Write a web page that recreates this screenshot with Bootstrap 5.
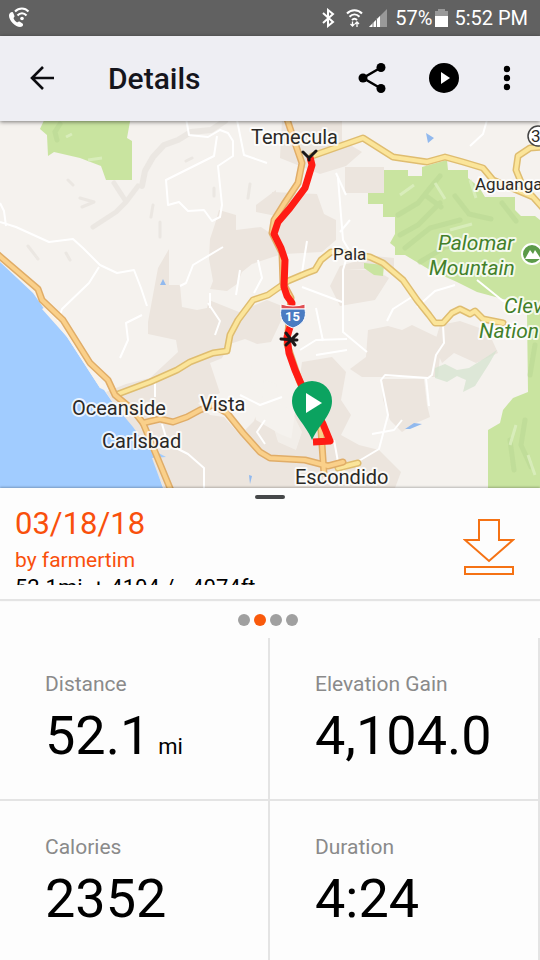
<!DOCTYPE html>
<html lang="en">
<head>
<meta charset="utf-8">
<meta name="viewport" content="width=device-width, initial-scale=1">
<title>Details</title>
<link href="https://cdn.jsdelivr.net/npm/bootstrap@5.3.0/dist/css/bootstrap.min.css" rel="stylesheet">
<style>
  body { font-family: Roboto, "Liberation Sans", sans-serif; background: #fdfdfd; color: #000; }
  .status-bar { background: #616161; color: #fff; height: 36px; font-size: 20px; line-height: 36px; padding: 0 12px 0 8px; }
  .wifi-icon { margin-left: 9px; margin-right: 2px; }
  .charge { margin-left: 7px; margin-right: 3px; }
  .clock { margin-left: 6px; }
  .app-bar { background: #eeeef3; height: 85px; padding: 0 18px 0 22px; box-shadow: 0 1px 4px rgba(0,0,0,.5); z-index: 2; }
  .app-bar h1 { font-size: 30px; font-weight: 500; color: #15151c; margin-left: 46px; }
  .icon-btn { border: 0; background: none; padding: 0; line-height: 0; color: #000; }
  .play-btn { margin-left: 41px; margin-right: 33px; }
  .route-map { aspect-ratio: 540 / 367; }
  .route-map text { font-size: 20px; fill: #2b2926; stroke: #fff; stroke-width: 4px; stroke-linejoin: round; stroke-opacity: .8; paint-order: stroke; }
  .route-map .minor-name { font-size: 17px; }
  .route-map .park-name { font-size: 21px; font-style: italic; fill: #42802a; }
  .route-map .road-number { font-size: 17px; stroke: none; }
  .route-map .shield-number { font-size: 13px; font-weight: 700; fill: #fff; stroke: none; }
  .sheet { height: 113px; border-bottom: 2px solid #e4e4e4; box-shadow: 0 -1px 2px rgba(0,0,0,.25); z-index: 1; background: #fdfdfd; }
  .sheet-body { padding: 0 25px 0 15px; }
  .grabber { width: 30px; height: 4px; border-radius: 2px; background: #46484a; margin: 7px auto 0; }
  .ride-title { font-size: 31px; line-height: 36px; color: #f9500c; margin-top: 7px; }
  .ride-author { font-size: 21px; line-height: 26px; color: #f9500c; text-decoration: none; margin-top: 5px; }
  .ride-summary { font-size: 22px; line-height: 26px; height: 10px; overflow: hidden; margin-top: 2px; }
  .download-btn { margin-top: 17px; }
  .pager { height: 37px; gap: 4px; padding-right: 4px; }
  .pager button { width: 12px; height: 12px; border: 0; padding: 0; border-radius: 50%; background: #a0a0a0; }
  .pager button.current { background: #f95a0c; }
  .stat { height: 161px; padding: 32px 0 0 45px; border-right: 2px solid #e4e4e4; }
  .stat-top { border-bottom: 2px solid #e4e4e4; height: 163px; }
  .stat dt { font-size: 21px; line-height: 28px; font-weight: 400; color: #8a8a8a; }
  .stat dd { font-size: 54px; line-height: 64px; margin: 6px 0 0; }
  .stat dd .unit { font-size: 22px; margin-left: 8px; }
</style>
<script src="https://cdn.jsdelivr.net/npm/bootstrap@5.3.0/dist/js/bootstrap.bundle.min.js"></script>
</head>
<body class="overflow-x-hidden">
<div class="status-bar d-flex align-items-center">
  <svg class="me-auto" width="24" height="24" viewBox="0 0 24 24" fill="none" stroke="#fff" aria-label="Wi-Fi calling">
    <path d="M2 7c2-1.500 3-1 3.500.500l1 2.500c.3 1-1.300 1.800-.8 2.800s1.500 2.500 2.800 3.200 2-1 3-.5l3 2c.8.600.8 2-.5 3C9 23.500-2.500 12 2 7z" fill="#fff" stroke="none"/>
    <path d="M7 5.500C11 1.500 17 1.500 20.500 5.500M9.500 9.500c2.500-3 6.500-3 9 0" stroke-width="2"/><circle cx="14" cy="12.500" r="1.800" fill="#fff" stroke="none"/>
  </svg>
  <svg width="14" height="20" viewBox="0 0 14 20" fill="none" stroke="#fff" stroke-width="2" aria-label="Bluetooth"><path d="M2 5l10 9-5 4V2l5 4-10 9"/></svg>
  <svg class="wifi-icon" width="22" height="20" viewBox="0 0 22 20" fill="none" stroke="#fff" stroke-width="2" aria-label="Wi-Fi">
    <path d="M3 5.500c4-4.500 11-4.500 15 0M5.500 8.800c3-3 7-3 10 0M8 12c1.500-1.500 3.500-1.500 5 0"/><path d="M8.500 13.500v5M6.500 16l2 2 2-2M13 19v-5M11 16l2-2 2 2" stroke-width="1.300"/>
  </svg>
  <svg width="20" height="20" viewBox="0 0 20 20" aria-label="Signal"><path d="M1 19L19 1v18z" fill="#999"/><path d="M1 19L12 8v11z" fill="#fff"/><path d="M5 14v5M8.500 10v9" stroke="#777"/></svg>
  <span class="charge">57%</span>
  <svg width="13" height="20" viewBox="0 0 13 20" aria-label="Battery"><path d="M3 1h7v2h3v7H0V3h3z" fill="#999"/><path d="M0 8h13v11H0z" fill="#fff"/></svg>
  <span class="clock">5:52 PM</span>
</div>

<header class="app-bar d-flex align-items-center position-relative">
  <button class="icon-btn" type="button" aria-label="Back"><svg width="40" height="32" viewBox="0 0 40 32" fill="none" stroke="#0c0c10" stroke-width="2.600"><path d="M32 15H10M21 4L10 15l11 11"/></svg></button>
  <h1 class="mb-0 me-auto">Details</h1>
  <button class="icon-btn" type="button" aria-label="Share"><svg width="32" height="32" viewBox="0 0 32 32" stroke="#000" stroke-width="2.500"><path d="M25 4.500L7 15l18 10.500" fill="none"/><g stroke="none"><circle cx="25" cy="4.500" r="4.500"/><circle cx="7" cy="15" r="4.500"/><circle cx="25" cy="25.500" r="4.500"/></g></svg></button>
  <button class="icon-btn play-btn" type="button" aria-label="Play"><svg width="30" height="32" viewBox="0 0 30 32"><circle cx="15" cy="15" r="15"/><path d="M12 9v12l9-6z" fill="#fff"/></svg></button>
  <button class="icon-btn" type="button" aria-label="More options"><svg width="30" height="32" viewBox="0 0 30 32"><circle cx="15" cy="6" r="3.200"/><circle cx="15" cy="15" r="3.200"/><circle cx="15" cy="24" r="3.200"/></svg></button>
</header>

<main>
<svg class="route-map w-100 d-block" viewBox="0 121 540 367" preserveAspectRatio="xMidYMid slice" role="img" aria-label="Route map from Escondido to Temecula">
  <path d="M0 110h540v390H0z" fill="#f5f2ee"/>
  <!-- built-up areas -->
  <g fill="#ece5de">
    <path d="M219 210l17 5v15l25-3 9 6 12-3v24l-30 10-10 8-5 12-10 7-17-2 3-8-4-22 1-20 5-15zM256 205l20-15v26l-20-4zM272 192l45 2 7 20 12 6v20l-14 12-38 2-10-16zM282 120h60v20l20 12-16 14-26 8-40-16zM345 167h39v26h-39zM158 268l11-19v36h11l2 22 15 3 10-2 2-8 30 12 28-12 20 8-16 34-14 2-12-5-15 5-8 14-4 22 30 8 8 32 24 14 20 8v50h-134l-20-40-40-60 20-8 24-6 28-26-2-12-28-6 0-12z"/>
    <path d="M368 330l20-4 14 4 10-5 25 12 3 18-2 22h-76l-12-8 16-12zM382 379h42l3 26 3 12-16 7-12 8-12-12-7-20zM440 325l20-4 28 10 10 22-22 10-22-10-12 10-8-18zM302 362l30-5 14 15-5 28 10 15-10 20 18 10 20 5 22 22-6 16h-125l20-40zM345 270h30l14 8-14 22-35 6-10-20 10-20 34-10 20 2v10z"/>
  </g>
  <g fill="#f5f2ee">
    <path d="M210 363l20-8 22 10-2 18 12 14-8 24-14 14-16-18-14-2-12-12 22-10z"/>
    <path d="M264 380l12 4 2 18 14 10 10 20-6 18-18-8-6-20-10-12z" opacity=".7"/>
  </g>
  <!-- low relief shading -->
  <g fill="none" stroke="#e8e4df" stroke-linejoin="round" stroke-linecap="round" opacity=".75">
    <path d="M225 121l-14 9-20 2-13 8-14 5-11 12-8 14-3 15" stroke-width="6"/>
    <path d="M138 186l-12 16-10 10-23 15M114 183l11 17" stroke-width="5"/>
    <path d="M153 205l-2 12M160 222l0 15M250 184l-2 14M28 246l10 13M68 180l5 5M80 198l14 4-12 5M66 253l4 7M214 188v8M186 161l6-3" stroke-width="3"/>
  </g>
  <!-- parks -->
  <g fill="#c9e4a0">
    <path d="M46 116L40 129l7 6 1 21 6-4 26 6 21 8 5 14h26v-39l-5-3 4-22z"/>
    <path d="M384 170h24v6h14v-9l25-7 1 10h20v8l11 9 6 10h30v13l6 6h14l5 4v86l-37-7-26-7-20-10-27-12-25-15h-10v-8l-5-4 5-9v-17h-12v-13h-15v-11h16z"/>
    <path d="M527 313l13-15v190h-52v-58l12-7 3-13 10-12 15-6z"/>
    <path d="M364 263l20 2-1 11-9-1-10-7z"/>
  </g>
  <g fill="none" stroke="#b3d28e" stroke-width="5" opacity=".4" stroke-linecap="round">
    <path d="M60 124l-5 8 2 8M398 215l20-12 12-15 10-12M400 235l18-10 22-22M405 248l25-20 30-8M420 262l25-15 35-6M425 195l16 12M455 196l14 18 22 5M502 203l14 18M525 420l-4 25 10 22M510 440l4 30M535 345l-5 30"/>
  </g>
  <g fill="none" stroke="#dcefc0" stroke-width="3" opacity=".8"><path d="M400 195l14-10M435 183l10 16M470 180l6 18M450 230l22-6M66 137l6-3M88 160l14-2M516 425l-6 20M528 455l7 20"/></g>
  <path d="M435 368l10-4 12 6 12-2 16-10 12-8-8 14-14 22-12 6 3-12-9-4-10 6-12-4z" fill="#d4e3cf" opacity=".75"/>
  <!-- ocean and lakes -->
  <path d="M0 262l33 31 12 17 22 27 33 51 4 2 9 13 20 24 14 20 19 10-14 1 11 30H0z" fill="#a1ccff"/>
  <path d="M42 309l25 28 33 51 4-2-27-42-30-38z" fill="#f9f3ec"/>
  <path d="M163 279l-3 6h6zM426 133l8 5-6 5zM405 429l9-6 8 1-12 5zM249 475l3 1-2 8z" fill="#91b9ee"/>
  <!-- minor roads -->
  <g fill="none" stroke="#fff" stroke-width="2" stroke-linejoin="round">
    <path d="M0 203l4 8 2 15M0 222l16 5 33 15 24-3 10 9 17 17 17 8 17-3 7 18 6 18M99 267l-10 16-27 26-4 12"/>
    <path d="M186 118l3 17 19 2 12-7 8 3 5 8v15l-15 10 4 39-2 12-8 4-8-11-16 1-9-9-11 3-2-25 48-24 3-20M237 120l7 35 23 8M223 247l-30 18-7 18-6 3M210 293v15M240 270l-4 25M258 260l4 18-8 15"/>
    <path d="M155 382v15M162 424l6 20 20 10 16 14v22M142 315l-16 8 2 17-8 18M215 335l5-14-12-18M265 420l-8 12 8 12M240 395l20 10 22-8"/>
    <path d="M338 178l5 62 6 10-6 20v62l24 20M342 302l-40-15M307 241l-6 38M316 308l7 33M300 350l16-10 31-1M316 355l31-5M415 295l-22 14-6 12M455 285l-20 6-18 16M487 120l-4 14-13 12M477 280l26 21 37 6"/>
    <path d="M443 325l1 18-8 12-4 20-4 3-43-3-4 5 7 35-9 34-37 22M334 440l4 22M426 378l3 28M372 434l22-4 8-10M346 195l-10-22M350 220l-10 12"/>
  </g>
  <!-- highways: casing below, fill above -->
  <g fill="none" stroke-linejoin="round" stroke-linecap="round">
    <g stroke="#dfbd70" stroke-width="7">
      <path d="M118 394l32-12 27-12 13-8 23-9 14-2 3-16 8-15 15-20 15-5 20-14 19-8 8-3 6-10 10-8 15 1 24 4 13 6 20 17 14 20 12 15 6 8h8l9-10 8-4 10 5 5-3 8 8 20 4"/>
      <path d="M312 156l51-18 30 19 34 5 18-5 18 5 20 6 10 12 40 17 10 11M545 147l-15 1-12 8-2 14 7 17 10 10M338 468l20-5"/>
    </g>
    <g stroke="#fbe59a" stroke-width="4">
      <path d="M118 394l32-12 27-12 13-8 23-9 14-2 3-16 8-15 15-20 15-5 20-14 19-8 8-3 6-10 10-8 15 1 24 4 13 6 20 17 14 20 12 15 6 8h8l9-10 8-4 10 5 5-3 8 8 20 4"/>
      <path d="M312 156l51-18 30 19 34 5 18-5 18 5 20 6 10 12 40 17 10 11M545 147l-15 1-12 8-2 14 7 17 10 10M338 468l20-5"/>
    </g>
    <g stroke="#e0ad68" stroke-width="7">
      <path d="M-4 253l42 36 4 11 21 20 27 43 18 17 7 15 18 15 10 13 10 24 19 46"/>
      <path d="M143 423l17-4 13 3 14-5 13-7 13-5 14 8 16 20 17 19 10 6 35 2 23 6 15-4M284 110l11 33 7 20-4 20-14 21-10 16-2 13 10 20 1 30 8 15-4 46 12 36 22 50 3 44"/>
    </g>
    <g stroke="#fad08a" stroke-width="4">
      <path d="M-4 253l42 36 4 11 21 20 27 43 18 17 7 15 18 15 10 13 10 24 19 46"/>
      <path d="M143 423l17-4 13 3 14-5 13-7 13-5 14 8 16 20 17 19 10 6 35 2 23 6 15-4M284 110l11 33 7 20-4 20-14 21-10 16-2 13 10 20 1 30 8 15-4 46 12 36 22 50 3 44"/>
    </g>
  </g>
  <!-- place names -->
  <text x="251" y="144">Temecula</text>
  <text class="minor-name" x="333" y="260">Pala</text>
  <text class="minor-name" x="475" y="190">Aguanga</text>
  <text x="72" y="415">Oceanside</text>
  <text x="102" y="448">Carlsbad</text>
  <text x="200" y="411">Vista</text>
  <text x="295" y="484">Escondido</text>
  <text class="park-name" x="438" y="250">Palomar</text>
  <text class="park-name" x="429" y="275">Mountain</text>
  <text class="park-name" x="504" y="313">Clev</text>
  <text class="park-name" x="479" y="338">Nation</text>
  <circle cx="532" cy="254" r="10" fill="#5b9a48" stroke="#fff" stroke-width="2"/><path d="M525 259l5-9 3 4 2-4 6 9z" fill="#fff"/>
  <circle cx="538" cy="136" r="10" fill="#fff" stroke="#444" stroke-width="1.500"/><text class="road-number" x="531" y="142">3</text>
  <!-- recorded route -->
  <path d="M310 157l2 8-7 23-15 20-12 14-4 12 7 14 4 12-1 27 3 9 5 7-2 24-3 10 2 16 6 17 7 16 21 38 7 17-17 1" fill="none" stroke="#ff1c14" stroke-width="7" stroke-linejoin="round"/>
  <path d="M303 152l6 6 7-7M309 157v3M281 339l16 1M286 333l9 12M297 334l-11 11" fill="none" stroke="#1c1717" stroke-width="3" stroke-linecap="round"/>
  <path d="M281 309v-5q12 4 24 0v5z" fill="#df5054" stroke="#fff"/>
  <path d="M281 309h24c2 10-3 16-12 19-9-3-14-9-12-19z" fill="#4b7cc2" stroke="#fff"/>
  <text class="shield-number" x="285" y="321">15</text>
  <path d="M312 440c-6-16-20-25-20-39a20 20 0 0 1 40 0c0 14-12 22-20 39z" fill="#0ba360"/><path d="M306 393v20l16-10z" fill="#fff"/>
</svg>

<section class="sheet position-relative">
  <div class="d-flex"><div class="grabber"></div></div>
  <div class="sheet-body d-flex justify-content-between">
    <div>
      <h2 class="ride-title fw-normal mb-0">03/18/18</h2>
      <a class="ride-author d-block" href="#">by farmertim</a>
      <div class="ride-summary">52.1mi, + 4104 / - 4074ft</div>
    </div>
    <button class="icon-btn download-btn align-self-start" type="button" aria-label="Download"><svg width="52" height="64" viewBox="0 0 52 64" fill="none" stroke="#f57214" stroke-width="2"><path d="M16 4h20v20h14L26 45 2 24h14zM2 51h48v7H2z"/></svg></button>
  </div>
</section>

<nav class="pager d-flex justify-content-center align-items-center" aria-label="Statistics pages">
  <button type="button" aria-label="Page 1"></button><button class="current" type="button" aria-label="Page 2" aria-current="page"></button><button type="button" aria-label="Page 3"></button><button type="button" aria-label="Page 4"></button>
</nav>

<dl class="row g-0 mb-0">
  <div class="col-6 stat stat-top"><dt>Distance</dt><dd>52.1<span class="unit">mi</span></dd></div>
  <div class="col-6 stat stat-top"><dt>Elevation Gain</dt><dd>4,104.0</dd></div>
  <div class="col-6 stat"><dt>Calories</dt><dd>2352</dd></div>
  <div class="col-6 stat"><dt>Duration</dt><dd>4:24</dd></div>
</dl>
</main>
</body>
</html>
